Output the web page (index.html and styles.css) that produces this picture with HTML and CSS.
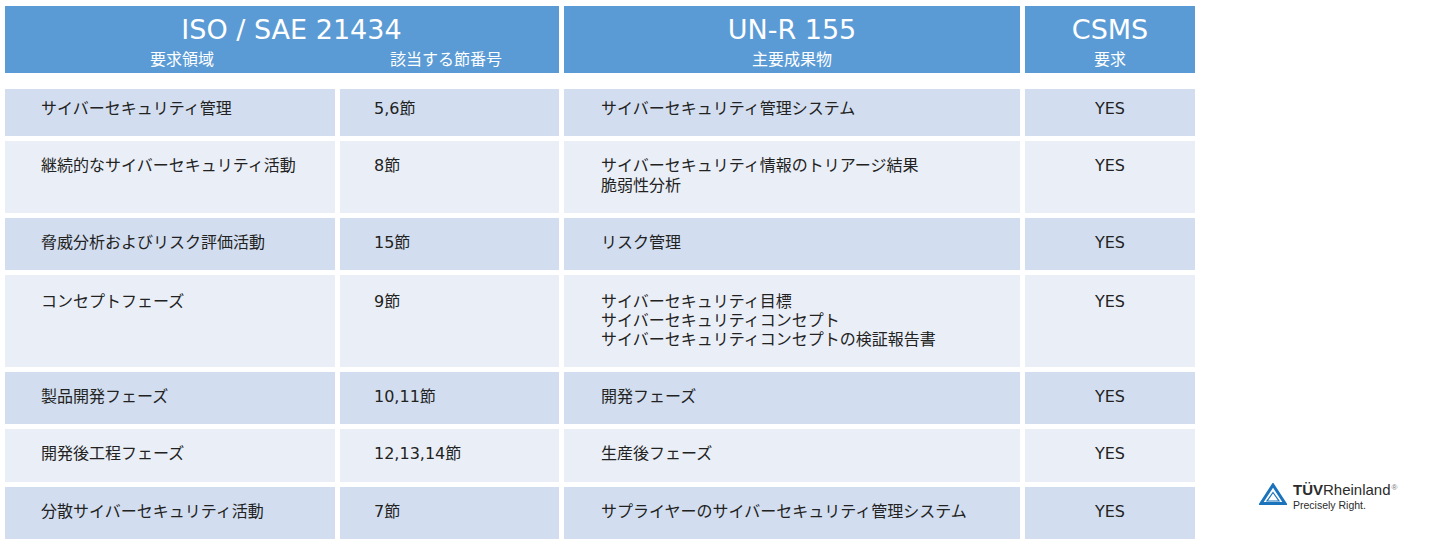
FILE: index.html
```html
<!DOCTYPE html>
<html lang="ja">
<head>
<meta charset="utf-8">
<title>ISO/SAE 21434 と UN-R 155</title>
<link rel="stylesheet" href="styles.css">
</head>
<body>
<div class="page">
  <div class="table">
    <div class="head">
      <div class="hcell hcell-iso">
        <div class="htitle htitle-iso">ISO / SAE 21434</div>
        <div class="hsubs">
          <span class="hsub">要求領域</span>
          <span class="hsub">該当する節番号</span>
        </div>
      </div>
      <div class="hcell">
        <div class="htitle">UN-R 155</div>
        <div class="hsub">主要成果物</div>
      </div>
      <div class="hcell">
        <div class="htitle">CSMS</div>
        <div class="hsub">要求</div>
      </div>
    </div>

    <div class="body">
      <div class="row dark r1">
        <div class="cell c1">サイバーセキュリティ管理</div>
        <div class="cell c2">5,6節</div>
        <div class="cell c3">サイバーセキュリティ管理システム</div>
        <div class="cell c4">YES</div>
      </div>
      <div class="row light r2">
        <div class="cell c1">継続的なサイバーセキュリティ活動</div>
        <div class="cell c2">8節</div>
        <div class="cell c3">サイバーセキュリティ情報のトリアージ結果<br>脆弱性分析</div>
        <div class="cell c4">YES</div>
      </div>
      <div class="row dark r3">
        <div class="cell c1">脅威分析およびリスク評価活動</div>
        <div class="cell c2">15節</div>
        <div class="cell c3">リスク管理</div>
        <div class="cell c4">YES</div>
      </div>
      <div class="row light r4">
        <div class="cell c1">コンセプトフェーズ</div>
        <div class="cell c2">9節</div>
        <div class="cell c3">サイバーセキュリティ目標<br>サイバーセキュリティコンセプト<br>サイバーセキュリティコンセプトの検証報告書</div>
        <div class="cell c4">YES</div>
      </div>
      <div class="row dark r5">
        <div class="cell c1">製品開発フェーズ</div>
        <div class="cell c2">10,11節</div>
        <div class="cell c3">開発フェーズ</div>
        <div class="cell c4">YES</div>
      </div>
      <div class="row light r6">
        <div class="cell c1">開発後工程フェーズ</div>
        <div class="cell c2">12,13,14節</div>
        <div class="cell c3">生産後フェーズ</div>
        <div class="cell c4">YES</div>
      </div>
      <div class="row dark r7">
        <div class="cell c1">分散サイバーセキュリティ活動</div>
        <div class="cell c2">7節</div>
        <div class="cell c3">サプライヤーのサイバーセキュリティ管理システム</div>
        <div class="cell c4">YES</div>
      </div>
    </div>
  </div>

  <div class="logo">
    <svg class="logo-mark" viewBox="0 0 28 22" width="28" height="22" aria-hidden="true">
      <polygon points="14,2 26,20.5 2,20.5" fill="none" stroke="#1a73bb" stroke-width="3" stroke-linejoin="miter"/>
      <polygon points="14,9.5 20,18 8,18" fill="none" stroke="#1a73bb" stroke-width="1.2"/>
    </svg>
    <div class="logo-text">
      <div class="logo-name"><b>TÜV</b>Rheinland<sup>®</sup></div>
      <div class="logo-tag">Precisely Right.</div>
    </div>
  </div>
</div>
</body>
</html>
```

FILE: styles.css
```css
html, body {
  margin: 0;
  padding: 0;
  background: #ffffff;
}

body {
  font-family: "DejaVu Sans", "Noto Sans CJK JP", sans-serif;
  color: #222222;
  width: 1443px;
  height: 560px;
  overflow: hidden;
}

.page {
  display: flex;
  align-items: flex-end;
  padding: 6px 0 0 5px;
}

.table {
  display: flex;
  flex-direction: column;
  gap: 16px;
}

.head {
  display: grid;
  grid-template-columns: 554px 456px 170px;
  column-gap: 5px;
}

.hcell {
  background: #5b9bd5;
  color: #ffffff;
  height: 67px;
  box-sizing: border-box;
  padding-top: 8px;
  display: flex;
  flex-direction: column;
  align-items: center;
}

.hcell-iso {
  align-items: stretch;
}

.htitle {
  font-size: 27px;
  line-height: 32px;
  text-align: center;
}

.htitle-iso {
  padding-left: 19px;
}

.hsubs {
  display: flex;
  gap: 176px;
  padding-left: 145px;
}

.hsub {
  font-size: 16px;
  line-height: 19px;
  margin-top: 4px;
}

.body {
  display: flex;
  flex-direction: column;
  gap: 5px;
}

.row {
  display: grid;
  grid-template-columns: 330px 219px 456px 170px;
  column-gap: 5px;
}

.cell {
  font-size: 16px;
  line-height: 19.5px;
  box-sizing: border-box;
}

.dark .cell { background: #d2deef; }
.light .cell { background: #eaeff7; }

.c1 { padding-left: 36px; }
.c2 { padding-left: 34px; }
.c3 { padding-left: 37px; }
.c4 { text-align: center; }

.r1 { height: 47px; }
.r2 { height: 72px; }
.r3 { height: 52px; }
.r4 { height: 92px; }
.r5 { height: 52px; }
.r6 { height: 53px; }
.r7 { height: 52px; }

.r1 .cell { padding-top: 10px; }
.r2 .cell { padding-top: 15px; }
.r3 .cell, .r5 .cell, .r6 .cell, .r7 .cell { padding-top: 15px; }
.r4 .cell { padding-top: 17px; line-height: 19px; }

.logo {
  display: flex;
  align-items: center;
  gap: 6px;
  margin-left: 64px;
  margin-bottom: 27px;
  font-family: "Liberation Sans", Arial, sans-serif;
  color: #2b2b2b;
}

.logo-mark {
  display: block;
  margin-top: -6px;
}

.logo-name {
  font-size: 15px;
  line-height: 16px;
  white-space: nowrap;
}

.logo-name b {
  font-weight: 700;
}

.logo-name sup {
  font-size: 8px;
  color: #777777;
  vertical-align: top;
  position: relative;
  top: -2px;
  margin-left: 1px;
}

.logo-tag {
  font-size: 10.5px;
  line-height: 14px;
}
```
